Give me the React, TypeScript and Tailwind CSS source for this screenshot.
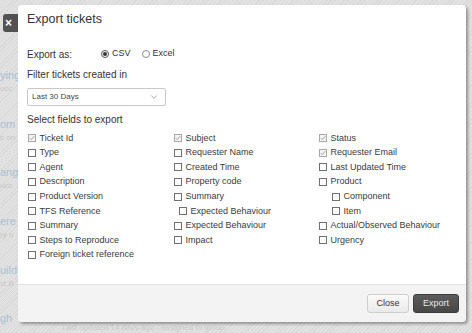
import { ChevronDown } from "lucide-react";

type Field = { label: string; checked?: boolean; indent?: number };

const columns: Field[][] = [
    [
        { label: "Ticket Id", checked: true },
        { label: "Type" },
        { label: "Agent" },
        { label: "Description" },
        { label: "Product Version" },
        { label: "TFS Reference" },
        { label: "Summary" },
        { label: "Steps to Reproduce" },
        { label: "Foreign ticket reference" },
    ],
    [
        { label: "Subject", checked: true },
        { label: "Requester Name" },
        { label: "Created Time" },
        { label: "Property code" },
        { label: "Summary" },
        { label: "Expected Behaviour", indent: 5 },
        { label: "Expected Behaviour" },
        { label: "Impact" },
    ],
    [
        { label: "Status", checked: true },
        { label: "Requester Email", checked: true },
        { label: "Last Updated Time" },
        { label: "Product" },
        { label: "Component", indent: 13 },
        { label: "Item", indent: 13 },
        { label: "Actual/Observed Behaviour" },
        { label: "Urgency" },
    ],
];

// bits of the page that peek out from behind the overlay, left of the dialog
const behind = [
    { link: "ying", note: "ucc" },
    { link: "om", note: "s on" },
    { link: "ang", note: "ucc" },
    { link: "ere", note: "ry o" },
    { link: "uild", note: "st B" },
    { link: "gh", note: "" },
];

function Checkbox({ checked }: { checked?: boolean }) {
    if (checked) {
        return (
            <span className="w-[8px] h-[8px] border border-[#a8a8a8] bg-[#f4f4f4] flex items-center justify-center shrink-0">
                <svg viewBox="0 0 8 8" className="w-[6px] h-[6px]" fill="none" stroke="#8a8a8a" strokeWidth="1">
                    <path d="M1 4.2 L3 6.2 L7 1.5" />
                </svg>
            </span>
        );
    }
    return <span className="w-[8px] h-[8px] border border-[#707070] bg-white shrink-0" />;
}

export default function App() {
    return (
        <div className="relative w-[472px] h-[333px] overflow-hidden bg-[repeating-linear-gradient(135deg,#d9d9d9_0px,#d9d9d9_1px,#e2e2e2_1px,#e2e2e2_3px)] font-['Liberation_Sans',Arial,sans-serif]">
            {/* page behind the overlay */}
            <div className="flex flex-col pt-[69px] w-[18px]">
                {behind.map((b, i) => (
                    <div key={i} className="h-[48.7px] flex flex-col">
                        <span className="text-[11px] leading-[13px] text-[#a8c0d3] whitespace-nowrap">{b.link}</span>
                        <span className="text-[8px] leading-[13px] text-[#c8c8c8] whitespace-nowrap">{b.note}</span>
                    </div>
                ))}
            </div>
            <div className="absolute left-0 bottom-0 pl-[62px] text-[8px] leading-[10px] text-[#cacaca] whitespace-nowrap">
                Last updated 14 days ago - assigned to group
            </div>

            {/* close tab */}
            <div className="absolute left-[3px] top-[14px] w-[20px] h-[18px] rounded-l-[3px] bg-[#525252] flex items-center pl-[2px]">
                <span className="text-white text-[12px] font-bold leading-none">×</span>
            </div>

            {/* dialog */}
            <div className="absolute left-[18px] top-[5px] w-[448px] h-[317px] bg-white rounded-[4px] shadow-[2px_2px_3px_rgba(0,0,0,0.35)] flex flex-col overflow-hidden text-[#333]">
                <div className="px-[9px] pt-[7px] flex-1 flex flex-col">
                    <h2 className="text-[12.5px] leading-[15px] text-[#333]">Export tickets</h2>

                    <div className="mt-[20px] flex items-center h-[14px] text-[10px]">
                        <span className="w-[74px]">Export as:</span>
                        <span className="w-[8px] h-[8px] rounded-full border border-[#555] flex items-center justify-center">
                            <span className="w-[4px] h-[4px] rounded-full bg-[#333]" />
                        </span>
                        <span className="ml-[3px] text-[9px]">CSV</span>
                        <span className="ml-[11px] w-[8px] h-[8px] rounded-full border border-[#8a8a8a]" />
                        <span className="ml-[3px] text-[9px]">Excel</span>
                    </div>

                    <p className="mt-[7px] text-[10px] leading-[14px]">Filter tickets created in</p>

                    <div className="mt-[6px] w-[139px] h-[18px] border border-[#c8c8c8] rounded-[2px] flex items-center justify-between pl-[4px] pr-[6px]">
                        <span className="text-[8px] text-[#444]">Last 30 Days</span>
                        <ChevronDown size={10} strokeWidth={1.4} color="#666" />
                    </div>

                    <p className="mt-[7px] text-[10px] leading-[14px]">Select fields to export</p>

                    <div className="mt-[4px] pl-[1px] grid grid-cols-[146px_145px_1fr]">
                        {columns.map((col, ci) => (
                            <div key={ci} className="flex flex-col">
                                {col.map((f, fi) => (
                                    <div key={fi} className={`h-[14.6px] flex items-center gap-[3.5px] text-[9px] text-[#3a3a3a] whitespace-nowrap ${f.indent === 5 ? "pl-[5px]" : f.indent === 13 ? "pl-[13px]" : ""}`}>
                                        <Checkbox checked={f.checked} />
                                        <span>{f.label}</span>
                                    </div>
                                ))}
                            </div>
                        ))}
                    </div>
                </div>

                <div className="h-[38px] shrink-0 border-t border-[#e2e2e2] bg-[#f3f3f3] flex items-center justify-end gap-[4px] pr-[7px]">
                    <button className="w-[42px] h-[19px] rounded-[3px] border border-[#cfcfcf] bg-[linear-gradient(#fbfbfb,#e9e9e9)] text-[9px] text-[#333]">
                        Close
                    </button>
                    <button className="w-[46px] h-[19px] rounded-[3px] border border-[#3c3c3c] bg-[linear-gradient(#5c5c5c,#474747)] text-[9px] text-[#e8e8e8]">
                        Export
                    </button>
                </div>
            </div>
        </div>
    );
}
